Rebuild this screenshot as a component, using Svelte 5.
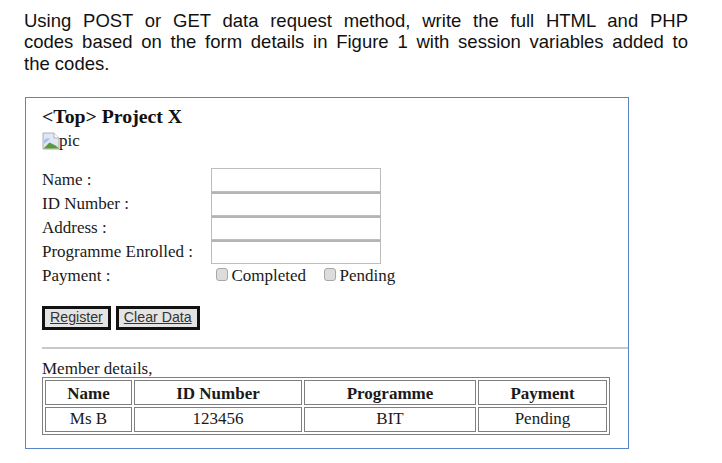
<script>
  const fields = ['Name :', 'ID Number :', 'Address :', 'Programme Enrolled :'];
  const cols = ['Name', 'ID Number', 'Programme', 'Payment'];
  const row = ['Ms B', '123456', 'BIT', 'Pending'];
</script>

<main class="page">
  <p class="question">
    <span class="line">Using POST or GET data request method, write the full HTML and PHP</span>
    <span class="line">codes based on the form details in Figure 1 with session variables added to</span>
    <span class="last">the codes.</span>
  </p>
  <section class="shot">
    <h1>&lt;Top&gt; Project X</h1>
    <div class="pic">
      <svg width="18" height="18" viewBox="0 0 18 18" aria-hidden="true">
        <path d="M1 1h11l5 5v11H1z" fill="#dfe6f4" stroke="#b0b0b0"/>
        <path d="M12 1v5h5" fill="#fff" stroke="#b0b0b0"/>
        <path d="M1.500 16.500l6-6 6 3 3.500 3z" fill="#5b9a3c"/>
        <path d="M2 8q3-3 6-1l-6 5z" fill="#a8c4ee"/>
      </svg><span>pic</span>
    </div>
    <div class="form">
      <div class="labels">
        {#each fields as f}<div class="label">{f}</div>{/each}
        <div class="label">Payment :</div>
      </div>
      <div class="controls">
        {#each fields as f}<div class="input"></div>{/each}
        <div class="checks">
          <span class="box"></span><span class="check-label">Completed</span>
          <span class="box"></span><span>Pending</span>
        </div>
      </div>
    </div>
    <div class="buttons">
      <button>Register</button>
      <button>Clear Data</button>
    </div>
    <hr />
    <div class="caption">Member details,</div>
    <table>
      <colgroup><col class="c1" /><col class="c2" /><col class="c3" /><col class="c4" /></colgroup>
      <thead><tr>{#each cols as c}<th>{c}</th>{/each}</tr></thead>
      <tbody><tr>{#each row as c}<td>{c}</td>{/each}</tr></tbody>
    </table>
  </section>
</main>

<style>
  :global(body) { margin: 0; background: #fff; }
  .page { width: 722px; height: 463px; overflow: hidden; box-sizing: border-box; padding: 10px 34px 0 24px; }
  .question { margin: 0; font: 18.5px/21px "Liberation Sans", Arial, sans-serif; color: #111; height: 65px; }
  .line { display: block; text-align: justify; text-align-last: justify; }
  .last { display: block; margin-top: 1px; }
  .shot {
    margin: 22px 0 0 1px; width: 604px; height: 352px; box-sizing: border-box;
    border: 1px solid #5b86c6; padding: 5px 0 0 16px;
    font: 17px/24px "Liberation Serif", "Times New Roman", serif; color: #1a1a1a;
  }
  h1 { margin: 0; font-size: 19.800px; line-height: 26px; font-weight: bold; color: #111; }
  .pic { display: flex; align-items: center; height: 23px; padding-top: 1px; box-sizing: border-box; }
  .pic span { margin-top: -1px; margin-left: -1px; }
  .form { display: flex; margin-top: 16px; }
  .labels { width: 169px; }
  .label { height: 24px; line-height: 24px; }
  .controls { width: 300px; }
  .input { width: 170px; height: 24px; box-sizing: border-box; border: 1px solid #bdbdbd; background: #fff; }
  .input + .input { border-top-width: 2px; border-top-color: #b4b4b4; }
  .checks { display: flex; align-items: center; height: 24px; padding-left: 5px; }
  .box { width: 10px; height: 11px; border: 1px solid #a8a8a8; border-radius: 3px; background: #dcdcdc; margin-right: 3.500px; margin-top: -4px; }
  .check-label { margin-right: 18px; }
  .buttons { display: flex; gap: 5px; margin-top: 18px; }
  button {
    height: 24px; padding: 0 5px 2px; box-sizing: border-box; border: 3px solid #111; background: #e4e4e4;
    font: 14.2px/1 "Liberation Sans", Arial, sans-serif; color: #333; text-decoration: underline;
  }
  hr { margin: 17px 0 0 0; border: 0; border-top: 2px solid #c9c9c9; }
  .caption { height: 20px; line-height: 24px; margin-top: 8px; }
  table {
    width: 568px; table-layout: fixed; border-collapse: separate; border-spacing: 2px;
    border: 1px solid #7f7f7f; background: #fff; box-sizing: border-box;
  }
  .c1 { width: 87px; } .c2 { width: 168px; } .c3 { width: 172px; } .c4 { width: 129px; }
  th, td { border: 1px solid #7f7f7f; height: 25px; box-sizing: border-box; text-align: center; line-height: 21px; font-size: 17px; }
  th { padding: 1px 0 0; }
  td { padding: 0 0 2px; }
</style>
